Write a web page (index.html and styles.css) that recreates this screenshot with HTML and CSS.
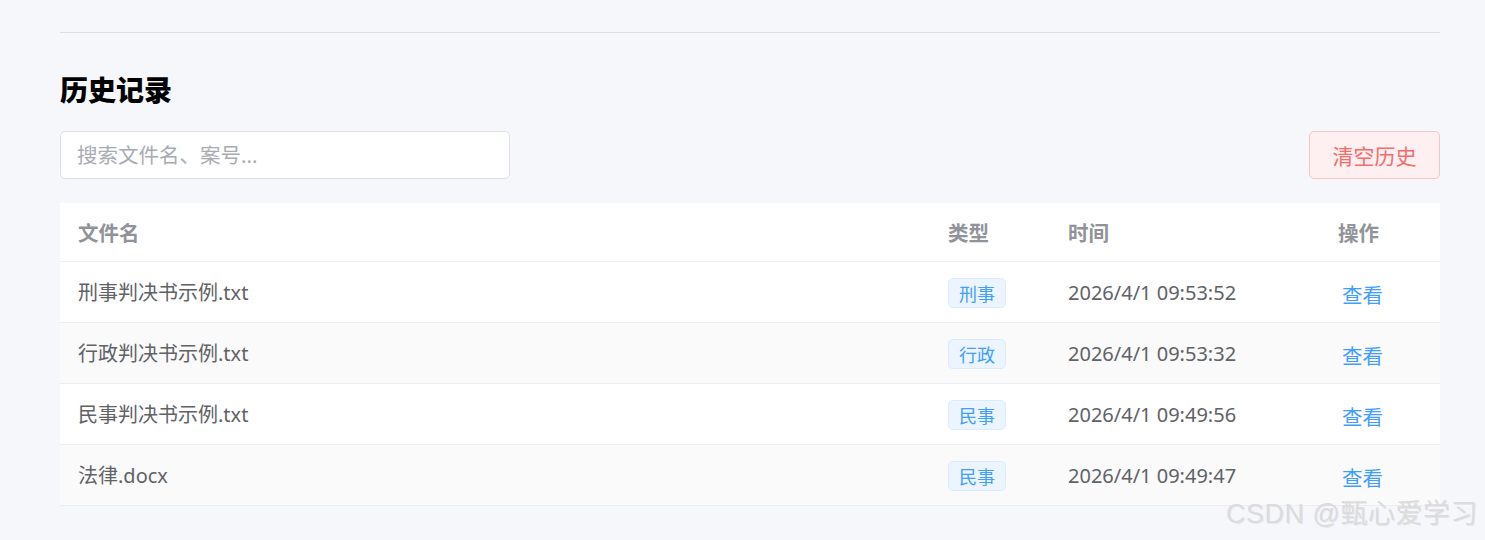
FILE: index.html
```html
<!DOCTYPE html>
<html lang="zh-CN">
<head>
<meta charset="utf-8">
<title>历史记录</title>
<link rel="stylesheet" href="styles.css">
</head>
<body>
<div class="page">
  <div class="divider"></div>
  <section class="history">
    <h2 class="title">历史记录</h2>
    <div class="toolbar">
      <input class="search" type="text" placeholder="搜索文件名、案号...">
      <button class="btn-danger" type="button">清空历史</button>
    </div>
    <table class="table">
      <colgroup>
        <col class="c-name"><col class="c-type"><col class="c-time"><col class="c-op">
      </colgroup>
      <thead>
        <tr><th>文件名</th><th>类型</th><th>时间</th><th>操作</th></tr>
      </thead>
      <tbody>
        <tr><td>刑事判决书示例.txt</td><td><span class="tag">刑事</span></td><td>2026/4/1 09:53:52</td><td><button class="link" type="button">查看</button></td></tr>
        <tr><td>行政判决书示例.txt</td><td><span class="tag">行政</span></td><td>2026/4/1 09:53:32</td><td><button class="link" type="button">查看</button></td></tr>
        <tr><td>民事判决书示例.txt</td><td><span class="tag">民事</span></td><td>2026/4/1 09:49:56</td><td><button class="link" type="button">查看</button></td></tr>
        <tr><td>法律.docx</td><td><span class="tag">民事</span></td><td>2026/4/1 09:49:47</td><td><button class="link" type="button">查看</button></td></tr>
      </tbody>
    </table>
  </section>
</div>
<div class="watermark">CSDN @甄心爱学习</div>
</body>
</html>
```
FILE: styles.css
```css
html, body {
  margin: 0;
  padding: 0;
  background: #f5f7fa;
  font-family: "Noto Sans", "Noto Sans CJK SC", sans-serif;
  color: #606266;
}
.page {
  padding: 32px 45px 0 60px;
}
.divider {
  height: 1px;
  background: #dcdfe6;
}
.history {
  padding-top: 36px;
}
.title {
  margin: 0 0 22px;
  font-size: 28px;
  line-height: 40px;
  font-weight: 900;
  color: #000;
  font-family: "Noto Sans CJK SC", sans-serif;
}
.toolbar {
  display: flex;
  justify-content: space-between;
  align-items: center;
  height: 48px;
  margin-bottom: 24px;
}
.search {
  box-sizing: border-box;
  width: 450px;
  height: 48px;
  border: 1px solid #dcdfe6;
  border-radius: 5px;
  background: #fff;
  padding: 0 16px;
  font-family: "Noto Sans", "Noto Sans CJK SC", sans-serif;
  font-size: 20.5px;
  color: #606266;
  outline: none;
}
.search::placeholder {
  color: #a8abb2;
}
.btn-danger {
  box-sizing: border-box;
  width: 131px;
  height: 48px;
  border: 1px solid #fbc4c4;
  border-radius: 5px;
  background: #fef0f0;
  color: #f56c6c;
  font-family: "Noto Sans CJK SC", sans-serif;
  font-size: 21px;
  padding: 0;
}
.table {
  width: 100%;
  border-collapse: collapse;
  background: #fff;
  table-layout: fixed;
}
.c-name { width: 870px; }
.c-type { width: 120px; }
.c-time { width: 270px; }
.c-op { width: 120px; }
.table th {
  height: 58px;
  padding: 0 18px;
  text-align: left;
  font-size: 20.5px;
  font-weight: 700;
  color: #909399;
  border-bottom: 1px solid #ebeef5;
  line-height: 28px;
  padding-top: 2px;
  box-sizing: border-box;
}
.table td {
  height: 57px;
  padding: 3px 18px 0;
  font-size: 20px;
  line-height: 28px;
  color: #606266;
  border-bottom: 1px solid #ebeef5;
  vertical-align: middle;
}
.table tbody tr:nth-child(even) td {
  background: #fafafa;
}
.tag {
  display: inline-block;
  box-sizing: border-box;
  height: 30px;
  line-height: 28px;
  padding: 0 10px;
  border: 1px solid #d9ecff;
  border-radius: 5px;
  background: #ecf5ff;
  color: #409eff;
  font-size: 18px;
  font-family: "Noto Sans CJK SC", sans-serif;
  vertical-align: middle;
}
.link {
  border: 0;
  background: none;
  padding: 3px 4px 0;
  color: #409eff;
  font-size: 20.5px;
  font-family: "Noto Sans CJK SC", sans-serif;
  line-height: 28px;
}
.watermark {
  position: absolute;
  right: 7px;
  top: 496px;
  font-size: 27px;
  line-height: 36px;
  font-weight: 400;
  color: #dcdcdc;
  text-shadow: 1px 1px 0 rgba(0,0,0,0.08);
  font-family: "Liberation Sans", "Noto Sans CJK SC", sans-serif;
  letter-spacing: 0.5px;
}
```
